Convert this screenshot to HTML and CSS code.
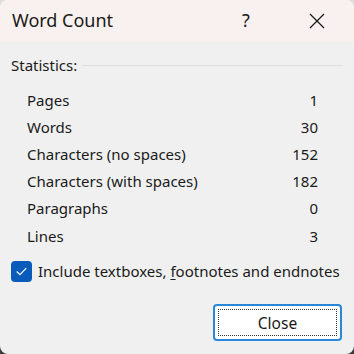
FILE: index.html
```html
<!DOCTYPE html>
<html>
<head>
<meta charset="utf-8">
<link rel="stylesheet" href="styles.css">
</head>
<body>
<div class="window">
  <div class="titlebar">
    <div class="title">Word Count</div>
    <div class="help">?</div>
    <div class="close-x">
      <svg width="16" height="16" viewBox="0 0 16 16"><path d="M1 1 L15 15 M15 1 L1 15" stroke="#1a1a1a" stroke-width="1.3" fill="none"/></svg>
    </div>
  </div>
  <div class="content">
    <div class="group-head">
      <span>Statistics:</span>
      <div class="rule"></div>
    </div>
    <div class="stats">
      <div class="label">Pages</div><div class="value">1</div>
      <div class="label">Words</div><div class="value">30</div>
      <div class="label">Characters (no spaces)</div><div class="value">152</div>
      <div class="label">Characters (with spaces)</div><div class="value">182</div>
      <div class="label">Paragraphs</div><div class="value">0</div>
      <div class="label">Lines</div><div class="value">3</div>
    </div>
    <div class="check-row">
      <div class="checkbox">
        <svg width="21" height="21" viewBox="0 0 21 21"><path d="M6 10.8 L9 13.6 L15 7.4" stroke="#ffffff" stroke-width="1.2" fill="none" stroke-linecap="round" stroke-linejoin="round"/></svg>
      </div>
      <span class="check-label">Include textboxes, <u>f</u>ootnotes and endnotes</span>
    </div>
    <div class="buttons">
      <div class="button"><div class="focus">Close</div></div>
    </div>
  </div>
</div>
</body>
</html>
```
FILE: styles.css
```css
html, body {
  margin: 0;
  padding: 0;
  width: 354px;
  height: 354px;
  overflow: hidden;
  background: linear-gradient(#dedede, #3a3a3a);
}
.window {
  width: 354px;
  height: 354px;
  border-radius: 8px;
  overflow: hidden;
  background: #f0f0f0;
  font-family: "Noto Sans", "Open Sans", sans-serif;
  color: #1a1a1a;
  display: flex;
  flex-direction: column;
}
.titlebar {
  height: 42px;
  background: #f9f1ef;
  display: flex;
  align-items: center;
  padding-left: 12px;
}
.title {
  font-size: 18px;
  flex: 1;
  padding-bottom: 2px;
}
.help {
  font-size: 18px;
  width: 20px;
  text-align: center;
  margin-right: 53px;
  padding-bottom: 2px;
}
.close-x {
  width: 16px;
  height: 16px;
  margin-right: 29px;
  display: flex;
}
.content {
  padding: 0 11px;
  flex: 1;
  display: flex;
  flex-direction: column;
}
.group-head {
  margin-top: 9px;
  height: 27px;
  display: flex;
  align-items: center;
  gap: 5px;
  font-size: 15px;
}
.rule {
  flex: 1;
  height: 1px;
  background: #e0e0e0;
  margin-top: 2px;
}
.stats {
  margin-top: 8px;
  display: grid;
  grid-template-columns: 1fr auto;
  grid-auto-rows: 27.2px;
  align-items: center;
  font-size: 15px;
  padding-left: 16px;
  padding-right: 25px;
}
.value {
  text-align: right;
}
.check-row {
  margin-top: 9px;
  height: 26px;
  display: flex;
  align-items: center;
  gap: 6px;
  font-size: 15px;
}
.checkbox {
  width: 21px;
  height: 21px;
  border-radius: 4px;
  background: #0b5cba;
  display: flex;
}
.check-label u {
  text-underline-offset: 2px;
}
.buttons {
  display: flex;
  justify-content: flex-end;
  margin-top: 20px;
}
.button {
  box-sizing: border-box;
  width: 129px;
  height: 37px;
  border: 2px solid #2a86d9;
  border-radius: 4px;
  background: #ffffff;
  margin-right: 1px;
  padding: 3px;
}
.focus {
  height: 100%;
  border: 1px dotted #333333;
  box-sizing: border-box;
  display: flex;
  align-items: center;
  justify-content: center;
  font-size: 15.5px;
}
```
